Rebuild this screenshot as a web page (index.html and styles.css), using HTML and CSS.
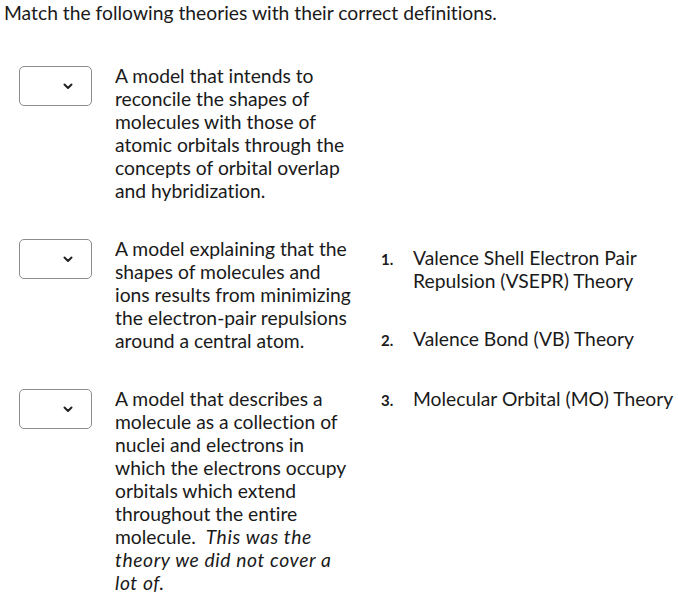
FILE: index.html
```html
<!DOCTYPE html>
<html lang="en">
<head>
<meta charset="utf-8">
<link rel="stylesheet" href="styles.css">
</head>
<body>
<div class="page">
  <h1 class="title">Match the following theories with their correct definitions.</h1>
  <div class="match">
    <div class="prompts">
      <div class="prompt">
        <div class="select"><svg class="chev" width="10" height="7" viewBox="0 0 10 7"><path d="M1.5 1.5 L5 5 L8.5 1.5" fill="none" stroke="#222" stroke-width="2" stroke-linecap="round" stroke-linejoin="round"/></svg></div>
        <p class="def">A model that intends to reconcile the shapes of molecules with those of atomic orbitals through the concepts of orbital overlap and hybridization.</p>
      </div>
      <div class="prompt">
        <div class="select"><svg class="chev" width="10" height="7" viewBox="0 0 10 7"><path d="M1.5 1.5 L5 5 L8.5 1.5" fill="none" stroke="#222" stroke-width="2" stroke-linecap="round" stroke-linejoin="round"/></svg></div>
        <p class="def">A model explaining that the shapes of molecules and ions results from minimizing the electron-pair repulsions around a central atom.</p>
      </div>
      <div class="prompt">
        <div class="select"><svg class="chev" width="10" height="7" viewBox="0 0 10 7"><path d="M1.5 1.5 L5 5 L8.5 1.5" fill="none" stroke="#222" stroke-width="2" stroke-linecap="round" stroke-linejoin="round"/></svg></div>
        <p class="def">A model that describes a molecule as a collection of nuclei and electrons in which the electrons occupy orbitals which extend throughout the entire molecule.&nbsp; <em class="note">This was the theory we did not cover a lot of.</em></p>
      </div>
    </div>
    <ol class="answers">
      <li class="answer"><span class="num">1.</span><span class="atext">Valence Shell Electron Pair Repulsion (VSEPR) Theory</span></li>
      <li class="answer"><span class="num">2.</span><span class="atext">Valence Bond (VB) Theory</span></li>
      <li class="answer"><span class="num">3.</span><span class="atext">Molecular Orbital (MO) Theory</span></li>
    </ol>
  </div>
</div>
</body>
</html>
```

FILE: styles.css
```css
html, body {
  margin: 0;
  padding: 0;
  background: #ffffff;
}
body {
  font-family: Lato, "Liberation Sans", sans-serif;
  color: #1a1a1a;
  font-size: 19.3px;
  line-height: 23px;
  font-variant-ligatures: none;
}
.page {
  padding: 1px 0 0 4px;
}
.title {
  margin: 0;
  font-size: 19.3px;
  font-weight: 400;
  line-height: 23px;
}
.match {
  display: flex;
  align-items: center;
  margin-top: 40px;
}
.prompts {
  display: flex;
  flex-direction: column;
  gap: 35px;
  width: 377px;
}
.prompt {
  display: flex;
  align-items: flex-start;
}
.select {
  box-sizing: border-box;
  width: 73px;
  height: 40px;
  margin: 2px 0 0 15px;
  border: 1px solid #8c8c8c;
  border-radius: 5px;
  display: flex;
  align-items: center;
  justify-content: flex-end;
  padding-right: 18px;
}
.chev {
  display: block;
}
.def {
  margin: 0 0 0 23px;
  width: 238px;
}
.note {
  letter-spacing: 0.6px;
}
.answers {
  list-style: none;
  margin: 0;
  padding: 0;
  display: flex;
  flex-direction: column;
  gap: 35px;
}
.answer {
  display: flex;
  align-items: baseline;
}
.num {
  width: 32px;
  font-size: 15px;
  font-weight: 700;
}
.atext {
  width: 265px;
}
```
